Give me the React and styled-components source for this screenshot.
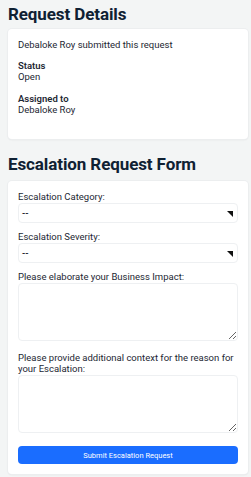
import React from 'react';
import styled, { createGlobalStyle } from 'styled-components';

const GlobalStyle = createGlobalStyle`
    html, body {
        margin: 0;
        padding: 0;
        background: #f3f5f5;
    }
    body {
        font-family: Roboto, "Liberation Sans", sans-serif;
        color: #1d2733;
    }
`

export default function App() {
    return (
        <Page>
            <GlobalStyle />
            <Title>Request Details</Title>
            <Card>
                <Line $gap={10}>Debaloke Roy submitted this request</Line>
                <Info>
                    <strong>Status</strong>
                    <span>Open</span>
                </Info>
                <Info>
                    <strong>Assigned to</strong>
                    <span>Debaloke Roy</span>
                </Info>
            </Card>

            <Title $top={14} $bottom={6}>Escalation Request Form</Title>
            <Card as="form" onSubmit={e => e.preventDefault()}>
                <Field $gap={8}>
                    <label>Escalation Category:</label>
                    <SelectBox>
                        <span>--</span>
                        <Arrow />
                    </SelectBox>
                </Field>
                <Field $gap={8}>
                    <label>Escalation Severity:</label>
                    <SelectBox>
                        <span>--</span>
                        <Arrow />
                    </SelectBox>
                </Field>
                <Field $gap={11}>
                    <label>Please elaborate your Business Impact:</label>
                    <TextArea />
                </Field>
                <Field $gap={13}>
                    <label>Please provide additional context for the reason for your Escalation:</label>
                    <TextArea />
                </Field>
                <SubmitBtn type="submit">Submit Escalation Request</SubmitBtn>
            </Card>
        </Page>
    );
}

function Arrow() {
    return (
        <svg width="6" height="6" viewBox="0 0 6 6">
            <polygon points="0,0 6,0 6,6" fill="#111" />
        </svg>
    );
}

const Page = styled.div`
    width: 251px;
    padding: 3px 3px 3px 8px;
    box-sizing: border-box;
`
const Title = styled.h1`
    margin: ${props => props.$top || 0}px 0 ${props => props.$bottom || 4}px;
    font-size: 17px;
    line-height: 22px;
    font-weight: 700;
    color: #0f2133;
    letter-spacing: -0.1px;
`
const Card = styled.div`
    display: flex;
    flex-direction: column;
    background: #fff;
    border-radius: 4px;
    box-shadow: 0 0 0 1px #eceeef, 0 1px 2px rgba(0, 0, 0, 0.08);
    padding: 10px;
    font-size: 9.5px;
    line-height: 11px;
`
const Line = styled.div`
    margin-bottom: ${props => props.$gap}px;
`
const Info = styled.div`
    display: flex;
    flex-direction: column;
    margin-bottom: 11px;
    strong {
        font-weight: 600;
    }
    &:last-child {
        margin-bottom: 14px;
    }
`
const Field = styled.div`
    display: flex;
    flex-direction: column;
    margin-bottom: ${props => props.$gap}px;
    label {
        margin-bottom: 1px;
    }
`
const SelectBox = styled.div`
    display: flex;
    align-items: center;
    justify-content: space-between;
    height: 20px;
    box-sizing: border-box;
    padding: 0 4px 0 3px;
    border: 1px solid #eef0f2;
    border-radius: 4px;
    font-size: 9px;
    font-weight: 600;
    svg {
        margin-top: 1px;
    }
`
const TextArea = styled.textarea`
    height: 58px;
    box-sizing: border-box;
    border: 1px solid #eef0f2;
    border-radius: 4px;
    padding: 3px;
    font-family: inherit;
    font-size: 9px;
    display: block;
    outline: none;
`
const SubmitBtn = styled.button`
    height: 18px;
    border: 0;
    border-radius: 4px;
    background: #1a6dff;
    color: #fff;
    font-family: Roboto, "Liberation Sans", sans-serif;
    font-size: 7.5px;
    padding: 0;
`
